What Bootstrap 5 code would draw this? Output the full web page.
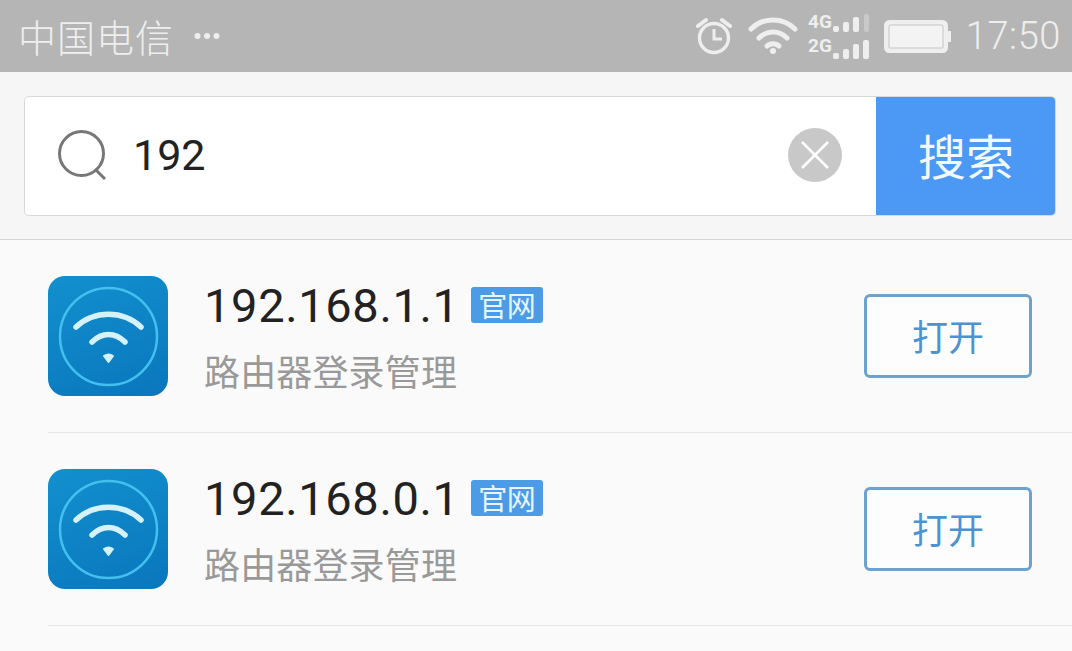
<!DOCTYPE html>
<html lang="zh">
<head>
<meta charset="utf-8">
<title>搜索</title>
<link href="https://cdn.jsdelivr.net/npm/bootstrap@5.3.0/dist/css/bootstrap.min.css" rel="stylesheet">
<style>
html,body{height:100%;overflow:hidden}
body{background:#f6f6f7;font-family:"Noto Sans CJK SC","Roboto",sans-serif;color:#222}
.phone-status{height:72px;background:#b5b5b5;color:#eee;padding:0 11px 0 18px}
.carrier{font-size:38px;line-height:1;letter-spacing:1px;font-weight:300}
.more-dots{width:26px;margin-left:20px}
.alarm-icon{margin-right:16px}
.net-icon{margin:0 14px 0 9px}
.clock{font-family:Roboto,sans-serif;font-size:38px;font-weight:300;line-height:1;letter-spacing:.6px;margin-left:15px}
.search-zone{height:168px;padding:24px 16px 24px 24px;border-bottom:1px solid #d4d4d6}
.search-box{height:120px;background:#fff;border:1px solid #d8d8d8;border-radius:5px;overflow:hidden}
.lens-icon{margin-left:33px;margin-bottom:2px}
.search-value{font-family:Roboto,sans-serif;font-size:43px;line-height:1;margin-left:25px;margin-bottom:2px;color:#222}
.clear-btn{width:54px;height:54px;border-radius:50%;background:#c8c8c8;margin-right:34px;margin-bottom:2px}
.search-go{width:180px;align-self:stretch;margin:-1px -1px -1px 0;background:#4b98f5;color:#f0faff;font-size:48px;line-height:1;border:0;border-radius:0 5px 5px 0;padding:0 0 5px}
.result-list{height:411px;background:#fafafb}
.result-row{height:193px;margin-left:48px;padding-right:40px;border-bottom:1px solid #e6e6e8}
.app-logo{width:120px;height:120px;border-radius:17px;background:linear-gradient(160deg,#1290ce,#0a76bd);margin-right:36px;flex:none}
.result-text{padding-bottom:3px}
.app-title{font-family:Roboto,sans-serif;font-size:47px;line-height:1;color:#222;letter-spacing:.65px}
.official{display:inline-block;background:#4c9be6;color:#e6f5ff;font-size:29px;line-height:35px;width:72px;height:36px;text-align:center;border-radius:3px;margin-left:11px;letter-spacing:-.5px}
.app-desc{font-size:36px;line-height:1;color:#999;margin-top:23px;letter-spacing:.15px}
.open-btn{width:168px;height:84px;background:#fdfdfd;border:3px solid #6ba2d0;border-radius:6px;color:#4d93cf;font-size:36px;line-height:1;padding:0 0 3px}
.open-btn:hover{background:#fdfdfd;color:#4d93cf;border-color:#6ba2d0}
</style>
</head>
<body>
<div class="phone-status d-flex align-items-center">
  <span class="carrier">中国电信</span>
  <svg class="more-dots" viewBox="0 0 26 8" height="8"><g fill="#eee"><circle cx="3.500" cy="4" r="3"/><circle cx="13" cy="4" r="3"/><circle cx="22.500" cy="4" r="3"/></g></svg>
  <div class="ms-auto d-flex align-items-center">
    <svg class="alarm-icon" width="36" height="38" viewBox="0 0 36 38" fill="none" stroke="#eee" stroke-width="3.400"><circle cx="18" cy="21" r="14.500"/><path d="M18 12v10h8" stroke-width="3"/><path d="M2 9 10 3M34 9 26 3" stroke-linecap="round" stroke-width="4"/></svg>
    <svg width="50" height="38" viewBox="0 0 50 38" fill="none" stroke="#eee" stroke-width="5" stroke-linecap="round"><path d="M3 12C15 0 35 0 47 12"/><path d="M11 21C19 13 31 13 39 21"/><path d="M19 29C22 26 28 26 31 29"/><circle cx="25" cy="34" r="3" fill="#eee" stroke="none"/></svg>
    <svg class="net-icon" width="63" height="56" viewBox="0 0 63 56"><g fill="#eee" font-family="Roboto,sans-serif" font-weight="700" font-size="19"><text x="1" y="20">4G</text><text x="1" y="44">2G</text><rect x="26" y="18" width="6" height="6" rx="2"/><rect x="36" y="14" width="6" height="10" rx="2"/><rect x="46" y="9" width="6" height="15" rx="2"/><rect x="26" y="45" width="6" height="6" rx="2"/><rect x="36" y="41" width="6" height="10" rx="2"/><rect x="46" y="36" width="6" height="15" rx="2"/><rect x="56" y="32" width="6" height="19" rx="2"/></g><rect x="57" y="6" width="5" height="18" rx="2" fill="#c9c9c9"/></svg>
    <svg width="67" height="33" viewBox="0 0 67 33"><rect x="1.500" y="1.500" width="61" height="30" rx="4" fill="#f0f0f0" stroke="#eee" stroke-width="3"/><rect x="5" y="5" width="54" height="23" rx="1" fill="#f3f3f3" stroke="#c4c4c4" stroke-width="1"/><rect x="64" y="11" width="3" height="11" fill="#eee"/></svg>
    <span class="clock">17:50</span>
  </div>
</div>

<div class="search-zone">
  <div class="search-box d-flex align-items-center">
    <svg class="lens-icon" width="50" height="50" viewBox="0 0 50 50" fill="none" stroke="#777" stroke-width="3"><circle cx="23.500" cy="23.500" r="22"/><path d="M37 39 47 49"/></svg>
    <span class="search-value">192</span>
    <div class="clear-btn ms-auto d-flex align-items-center justify-content-center">
      <svg width="30" height="30" viewBox="0 0 30 30" stroke="#fff" stroke-width="2.500"><path d="M2 2 28 28M28 2 2 28"/></svg>
    </div>
    <button class="btn search-go" type="button">搜索</button>
  </div>
</div>

<div class="result-list">
<div class="result-row d-flex align-items-center">
  <svg class="app-logo" viewBox="0 0 120 120" fill="none">
    <circle cx="60.500" cy="60.500" r="48.500" stroke="#43c0ee" stroke-width="2.500"/>
    <path d="M28 51C46 34 75 34 93 51M44 66C54 56 67 56 77 66" stroke="#d5f2fb" stroke-width="5.500" stroke-linecap="round"/>
    <path d="M56 80Q60.500 77 65 80L60.500 86Z" fill="#d5f2fb" stroke="#d5f2fb" stroke-width="2" stroke-linejoin="round"/>
  </svg>
  <div class="flex-grow-1 result-text">
    <div class="d-flex align-items-center"><span class="app-title">192.168.1.1</span><span class="official">官网</span></div>
    <div class="app-desc">路由器登录管理</div>
  </div>
  <button class="btn open-btn" type="button">打开</button>
</div>

<div class="result-row d-flex align-items-center">
  <svg class="app-logo" viewBox="0 0 120 120" fill="none">
    <circle cx="60.500" cy="60.500" r="48.500" stroke="#43c0ee" stroke-width="2.500"/>
    <path d="M28 51C46 34 75 34 93 51M44 66C54 56 67 56 77 66" stroke="#d5f2fb" stroke-width="5.500" stroke-linecap="round"/>
    <path d="M56 80Q60.500 77 65 80L60.500 86Z" fill="#d5f2fb" stroke="#d5f2fb" stroke-width="2" stroke-linejoin="round"/>
  </svg>
  <div class="flex-grow-1 result-text">
    <div class="d-flex align-items-center"><span class="app-title">192.168.0.1</span><span class="official">官网</span></div>
    <div class="app-desc">路由器登录管理</div>
  </div>
  <button class="btn open-btn" type="button">打开</button>
</div>
</div>
<script src="https://cdn.jsdelivr.net/npm/bootstrap@5.3.0/dist/js/bootstrap.bundle.min.js"></script>
</body>
</html>
